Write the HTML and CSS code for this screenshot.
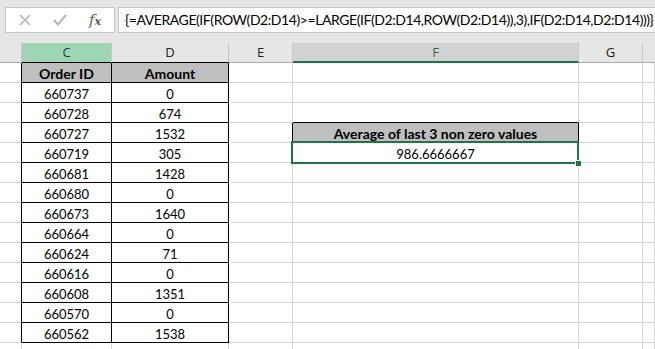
FILE: index.html
```html
<!DOCTYPE html>
<html>
<head>
<meta charset="utf-8">
<link rel="stylesheet" href="styles.css">
</head>
<body>
<div class="app">
  <div class="toolbar">
    <div class="fxbox">
      <svg class="ico" width="16" height="16" viewBox="0 0 16 16"><path d="M3 3 L13 13 M13 3 L3 13" stroke="#b4b4b4" stroke-width="1.6" fill="none"/></svg>
      <svg class="ico" width="16" height="16" viewBox="0 0 16 16"><path d="M2 8 L6 12.5 L14 3" stroke="#b4b4b4" stroke-width="2" fill="none"/></svg>
      <span class="fx"><span class="fx-f">f</span><span class="fx-x">x</span></span>
    </div>
    <div class="formula">{=AVERAGE(IF(ROW(D2:D14)&gt;=LARGE(IF(D2:D14,ROW(D2:D14)),3),IF(D2:D14,D2:D14)))}</div>
  </div>
  <div class="sheet">
    <div class="hd"></div><div class="hd hd-sel">C</div><div class="hd">D</div><div class="hd">E</div><div class="hd hd-act">F</div><div class="hd">G</div><div class="hd hd-last"></div>

    <div class="c tb-l"></div><div class="c t th">Order ID</div><div class="c t th">Amount</div><div class="c"></div><div class="c"></div><div class="c"></div><div class="c"></div>
    <div class="c tb-l"></div><div class="c t">660737</div><div class="c t">0</div><div class="c"></div><div class="c"></div><div class="c"></div><div class="c"></div>
    <div class="c tb-l"></div><div class="c t">660728</div><div class="c t">674</div><div class="c"></div><div class="c avg-top"></div><div class="c"></div><div class="c"></div>
    <div class="c tb-l"></div><div class="c t">660727</div><div class="c t">1532</div><div class="c avg-l"></div><div class="c t th">Average of last 3 non zero values</div><div class="c"></div><div class="c"></div>
    <div class="c tb-l"></div><div class="c t">660719</div><div class="c t">305</div><div class="c"></div><div class="c val">986.6666667</div><div class="c"></div><div class="c"></div>
    <div class="c tb-l"></div><div class="c t">660681</div><div class="c t">1428</div><div class="c"></div><div class="c"></div><div class="c"></div><div class="c"></div>
    <div class="c tb-l"></div><div class="c t">660680</div><div class="c t">0</div><div class="c"></div><div class="c"></div><div class="c"></div><div class="c"></div>
    <div class="c tb-l"></div><div class="c t">660673</div><div class="c t">1640</div><div class="c"></div><div class="c"></div><div class="c"></div><div class="c"></div>
    <div class="c tb-l"></div><div class="c t">660664</div><div class="c t">0</div><div class="c"></div><div class="c"></div><div class="c"></div><div class="c"></div>
    <div class="c tb-l"></div><div class="c t">660624</div><div class="c t">71</div><div class="c"></div><div class="c"></div><div class="c"></div><div class="c"></div>
    <div class="c tb-l"></div><div class="c t">660616</div><div class="c t">0</div><div class="c"></div><div class="c"></div><div class="c"></div><div class="c"></div>
    <div class="c tb-l"></div><div class="c t">660608</div><div class="c t">1351</div><div class="c"></div><div class="c"></div><div class="c"></div><div class="c"></div>
    <div class="c tb-l"></div><div class="c t">660570</div><div class="c t">0</div><div class="c"></div><div class="c"></div><div class="c"></div><div class="c"></div>
    <div class="c tb-l"></div><div class="c t">660562</div><div class="c t">1538</div><div class="c"></div><div class="c"></div><div class="c"></div><div class="c"></div>
    <div class="c"></div><div class="c"></div><div class="c"></div><div class="c"></div><div class="c"></div><div class="c"></div><div class="c"></div>

    <div class="selection"><div class="handle"></div></div>
  </div>
</div>
</body>
</html>
```

FILE: styles.css
```css
* { box-sizing: border-box; }
html, body { margin: 0; padding: 0; }
body {
  width: 655px;
  height: 349px;
  overflow: hidden;
  background: #fff;
  font-family: "Lato", "Liberation Sans", sans-serif;
}
.app { width: 655px; height: 349px; overflow: hidden; }

.toolbar {
  height: 43px;
  background: #e6e6e6;
  display: flex;
  align-items: flex-start;
  padding-top: 7px;
}
.fxbox {
  margin-left: 5px;
  width: 110px;
  height: 26px;
  background: #fff;
  border: 1px solid #c6c6c6;
  display: flex;
  align-items: center;
  padding-left: 11px;
}
.ico { flex: none; }
.ico + .ico { margin-left: 19px; }
.fx {
  margin-left: 21px;
  font-family: "DejaVu Serif", "Liberation Serif", serif;
  font-style: italic;
  color: #5a5a5a;
  line-height: 1;
  display: flex;
  align-items: baseline;
}
.fx-f { font-size: 15px; }
.fx-x { font-size: 11px; font-weight: bold; }

.formula {
  margin-left: 3px;
  flex: 1;
  height: 26px;
  background: #fff;
  border: 1px solid #c6c6c6;
  border-right: none;
  padding-left: 6px;
  font-size: 14px;
  letter-spacing: -0.43px;
  line-height: 24px;
  color: #000;
  white-space: nowrap;
  overflow: hidden;
}

.sheet {
  position: relative;
  display: grid;
  grid-template-columns: 22px 90px 117px 64px 286px 64px 12px;
  grid-auto-rows: 20px;
}
.hd {
  background: #e6e6e6;
  border-right: 1px solid #c8c8c8;
  border-bottom: 1px solid #ababab;
  font-family: "Open Sans", "Noto Sans", sans-serif;
  font-size: 13px;
  color: #222;
  text-align: center;
  line-height: 19px;
}
.hd-last { border-right: none; }
.hd-sel { background: #9fd5b7; color: #1e3b2c; border-bottom-color: #000; }
.hd:nth-child(3) { border-bottom-color: #000; }
.hd-act { background: #d2d2d2; color: #217346; border-bottom: 2px solid #217346; line-height: 18px; }

.c {
  border-right: 1px solid #d4d4d4;
  border-bottom: 1px solid #d4d4d4;
  font-size: 13px;
  line-height: 20px;
  padding-top: 1px;
  text-align: center;
  color: #000;
  white-space: nowrap;
}
.tb-l { border-right-color: #000; }
.t { border-right-color: #000; border-bottom-color: #000; }
.th { background: #bfbfbf; font-weight: bold; font-size: 14px; }
.avg-top { border-bottom-color: #000; }
.avg-l { border-right-color: #000; }

.selection {
  position: absolute;
  left: 291px;
  top: 98px;
  width: 288px;
  height: 23px;
  border: 2px solid #217346;
  pointer-events: none;
}
.handle {
  position: absolute;
  right: -4px;
  bottom: -4px;
  width: 6px;
  height: 6px;
  background: #217346;
  border: 1px solid #fff;
  border-width: 1px 0 0 1px;
}
```
